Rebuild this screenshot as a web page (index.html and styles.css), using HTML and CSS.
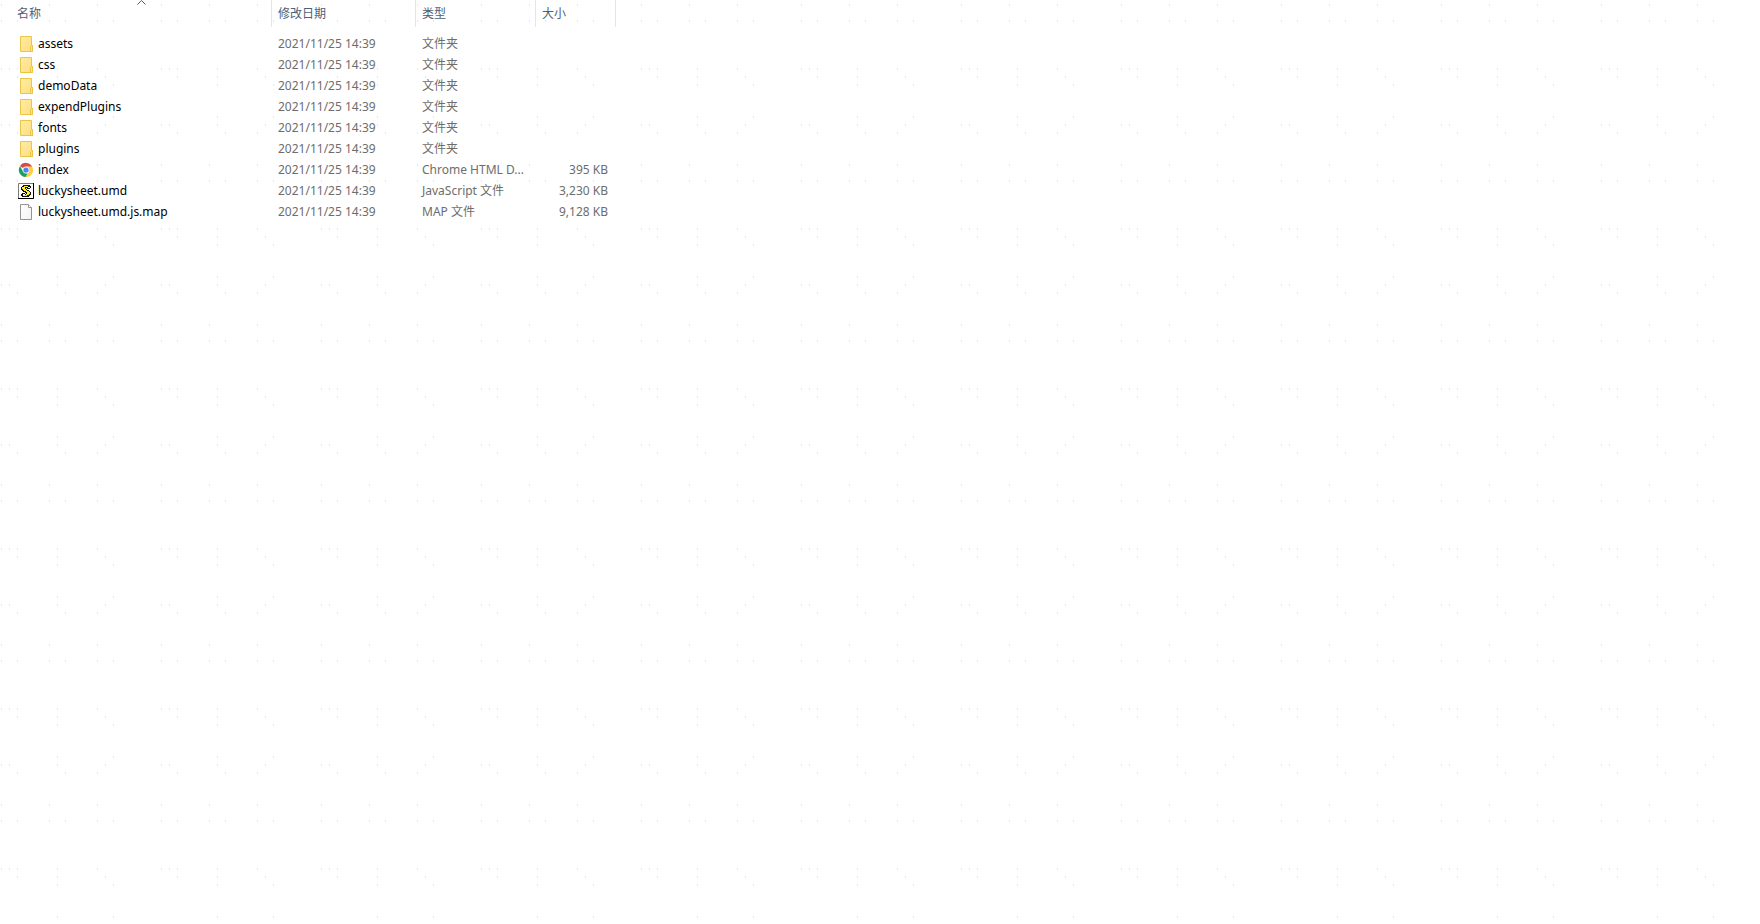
FILE: index.html
```html
<!DOCTYPE html>
<html lang="zh-CN">
<head>
<meta charset="utf-8">
<title>luckysheet</title>
<link rel="stylesheet" href="styles.css">
</head>
<body>
<svg class="speckle" aria-hidden="true">
  <defs>
    <pattern id="dots" width="160" height="160" patternUnits="userSpaceOnUse">
      <path fill="#e6e6e6" d="M1 4h1v2h-1zM49 4h1v2h-1zM97 4h1v2h-1zM1 20h1v2h-1zM17 20h1v2h-1zM49 20h1v2h-1zM65 20h1v2h-1zM97 20h1v2h-1zM113 20h1v2h-1zM1 68h1v2h-1zM9 68h1v2h-1zM17 68h1v2h-1zM57 68h1v2h-1zM97 68h1v2h-1zM17 76h1v2h-1zM57 76h1v2h-1zM105 76h1v2h-1zM57 84h1v2h-1zM113 84h1v2h-1zM57 116h1v2h-1zM113 116h1v2h-1zM1 124h1v2h-1zM9 124h1v2h-1zM57 124h1v2h-1zM105 124h1v2h-1zM17 132h1v2h-1zM65 132h1v2h-1zM97 132h1v2h-1z"/>
    </pattern>
    <linearGradient id="folderFill" x1="0" y1="0" x2="1" y2="1"><stop offset="0" stop-color="#ffeba6"/><stop offset="1" stop-color="#ffdf7c"/></linearGradient>
    <linearGradient id="pageFill" x1="0" y1="0" x2="1" y2="1"><stop offset="0" stop-color="#fff"/><stop offset="1" stop-color="#f1f2f2"/></linearGradient>
    <symbol id="folder" viewBox="0 0 16 16">
      <path d="M2.5 .5h11v9h1v6h-12z" fill="url(#folderFill)" stroke="#ebc548"/>
      <path d="M12.5 15.5v-5l1-1h1v6z" fill="#ffe187" stroke="#ebc548"/>
    </symbol>
  </defs>
  <rect width="100%" height="100%" fill="url(#dots)"/>
</svg>
<main class="explorer">
<table class="files">
  <colgroup><col class="col-name"><col class="col-date"><col class="col-type"><col class="col-size"></colgroup>
  <thead>
    <tr>
      <th scope="col" aria-sort="ascending"><button type="button">名称</button><svg class="sort" viewBox="0 0 9 5" aria-hidden="true"><path d="M.5 4.5l4-4 4 4" fill="none" stroke="#5a5a5a"/></svg></th>
      <th scope="col"><button type="button">修改日期</button></th>
      <th scope="col"><button type="button">类型</button></th>
      <th scope="col"><button type="button">大小</button></th>
    </tr>
  </thead>
  <tbody>
    <tr><td><div class="name"><svg class="icon"><use href="#folder"/></svg>assets</div></td><td>2021/11/25 14:39</td><td>文件夹</td><td></td></tr>
    <tr><td><div class="name"><svg class="icon"><use href="#folder"/></svg>css</div></td><td>2021/11/25 14:39</td><td>文件夹</td><td></td></tr>
    <tr><td><div class="name"><svg class="icon"><use href="#folder"/></svg>demoData</div></td><td>2021/11/25 14:39</td><td>文件夹</td><td></td></tr>
    <tr><td><div class="name"><svg class="icon"><use href="#folder"/></svg>expendPlugins</div></td><td>2021/11/25 14:39</td><td>文件夹</td><td></td></tr>
    <tr><td><div class="name"><svg class="icon"><use href="#folder"/></svg>fonts</div></td><td>2021/11/25 14:39</td><td>文件夹</td><td></td></tr>
    <tr><td><div class="name"><svg class="icon"><use href="#folder"/></svg>plugins</div></td><td>2021/11/25 14:39</td><td>文件夹</td><td></td></tr>
    <tr><td><div class="name"><svg class="icon" viewBox="0 0 16 16">
      <path d="M8 8L2 4.2A7 7 0 0 1 14.2 4.7H8z" fill="#dd4b3e"/>
      <path d="M8 4.700H14.200A7 7 0 0 1 7.6 15L10.9 9.6z" fill="#ffcd42"/>
      <path d="M2 4.2L5.1 9.6L8 11.2L9.5 11.4L7.6 15A7 7 0 0 1 2 4.2z" fill="#17a05e"/>
      <circle cx="8" cy="8" r="3.4" fill="#f1f1f1"/><circle cx="8" cy="8" r="2.6" fill="#4a87f4"/>
    </svg>index</div></td><td>2021/11/25 14:39</td><td>Chrome HTML D...</td><td>395 KB</td></tr>
    <tr><td><div class="name"><svg class="icon" viewBox="0 0 16 16">
      <path d="M.5 .5h15v15H.5z" fill="#fff" stroke="#7b7b7b"/><path d="M15.5 0v15.5H0" fill="none" stroke="#000"/>
      <g shape-rendering="crispEdges">
        <path d="M5 2h7v1h1v2h-1v1h-3v1h2v1h1v1h1v3h-1v1h-1v1H4v-1H3v-2h1v-1h3V9H5V8H4V7H3V4h1V3h1z" fill="#111"/>
        <path d="M6 3h4v1H6zM4 4h3v1H4zM4 5h3v1H4zM5 6h3v1H5zM6 7h3v1H6zM8 8h3v1H8zM9 9h3v2H9zM8 11h3v1H8zM5 12h4v1H5z" fill="#f7f02b"/>
        <path d="M10 4h2v1h-2zM8 5h1v1H8zM5 11h2v1H5zM7 10h1v1H7z" fill="#fff"/>
      </g>
    </svg>luckysheet.umd</div></td><td>2021/11/25 14:39</td><td>JavaScript 文件</td><td>3,230 KB</td></tr>
    <tr><td><div class="name"><svg class="icon" viewBox="0 0 16 16">
      <path d="M2.5 .5h8l3 3v12h-11z" fill="url(#pageFill)" stroke="#949494"/><path d="M10.5 .5v3h3" fill="#fff" stroke="#949494"/>
    </svg>luckysheet.umd.js.map</div></td><td>2021/11/25 14:39</td><td>MAP 文件</td><td>9,128 KB</td></tr>
  </tbody>
</table>
</main>
</body>
</html>
```
FILE: styles.css
```css
body {
  margin: 0;
  min-height: 100vh;
  background: #fff;
  color: #6d6d6d;
  font: 12px/21px "Noto Sans", "Noto Sans CJK SC", sans-serif;
}

.speckle {
  position: absolute;
  inset: 0;
  width: 100%;
  height: 100%;
  z-index: -1;
}

.explorer {
  overflow: hidden;
}

.files {
  width: 616px;
  table-layout: fixed;
  border-collapse: separate;
  border-spacing: 0;
}

.col-name { width: 272px; }
.col-date { width: 144px; }
.col-type { width: 120px; }
.col-size { width: 80px; }

th {
  position: relative;
  height: 27px;
  padding: 0 0 0 6px;
  border-right: 1px solid #e5e5e5;
  text-align: left;
  box-sizing: border-box;
}

th:first-child {
  padding-left: 17px;
}

th button {
  padding: 0;
  border: 0;
  background: none;
  color: #4c607a;
  font: 12px/27px "Noto Sans", "Noto Sans CJK SC", sans-serif;
  display: block;
}

.sort {
  position: absolute;
  top: 0;
  left: 137px;
  width: 9px;
  height: 5px;
}

tbody::before {
  content: "";
  display: block;
  height: 6px;
}

td {
  height: 21px;
  padding: 0 6px;
  white-space: nowrap;
}

td:first-child {
  padding-left: 18px;
}

td:last-child {
  padding-right: 8px;
  text-align: right;
}

.name {
  display: flex;
  align-items: center;
  gap: 4px;
  color: #000;
}

.icon {
  width: 16px;
  height: 16px;
  flex: none;
}
```
